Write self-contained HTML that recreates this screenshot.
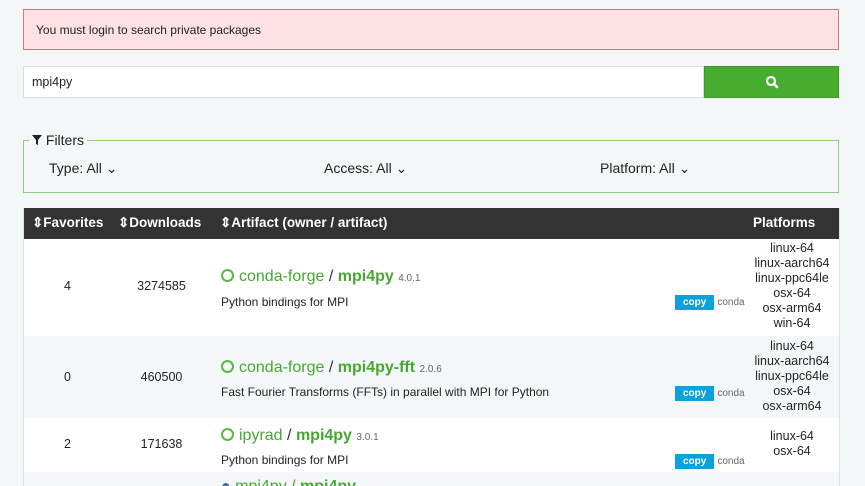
<!DOCTYPE html>
<html><head><style>
*{box-sizing:border-box;margin:0;padding:0}
body{width:865px;height:486px;overflow:hidden;background:#f4f7f8;font-family:"Liberation Sans",sans-serif;color:#222;position:relative}
.abs{position:absolute}
.alert{left:23px;top:9px;width:816px;height:41px;background:#fde1e5;border:1px solid #c97a86;font-size:12px;padding:13px 12px}
.inp{left:23px;top:66px;width:681px;height:32px;background:#fff;border:1px solid #ddd;font-size:12.5px;padding:8px 8px}
.btn{left:704px;top:66px;width:135px;height:32px;background:#46ad2e;border:1px solid #3d9a28}
.fs{left:23px;top:140px;width:816px;height:53px;border:1px solid #8bcf7d}
.lg{left:29px;top:132px;font-size:14px;padding:0 3px;background:#f4f7f8}
.f{position:absolute;top:160px;font-size:14px}
.hdr{left:23px;top:208px;width:816px;height:31px;background:#333;color:#fff;font-weight:bold;font-size:13.5px}
.hdr span{position:absolute;top:7px}
.row{left:23px;width:816px;font-size:12.5px}
.c1{position:absolute;width:89px;text-align:center}
.c2{position:absolute;left:89px;width:99px;text-align:center}
.name{position:absolute;left:198px;font-size:16px;color:#46a832;white-space:nowrap}
.name b{font-weight:bold}
.name small{font-size:10px;color:#666}
.name .sl{color:#333}
.ring{display:inline-block;width:13px;height:13px;border:2.5px solid #5cb844;border-radius:50%;margin-right:5px;vertical-align:-1px}
.desc{position:absolute;left:198px;font-size:12px}
.copy{position:absolute;left:652px;font-size:10px;color:#666}
.copy span{display:inline-block;background:#0aa2dc;color:#fff;font-weight:bold;padding:2px 8px;margin-right:3px}
.plat{position:absolute;left:722px;width:94px;text-align:center;font-size:12.5px;line-height:15px}
</style></head><body>
<div class="abs alert">You must login to search private packages</div>
<div class="abs inp">mpi4py</div>
<div class="abs btn"><svg width="135" height="30"><circle cx="66" cy="14" r="4" fill="none" stroke="#fff" stroke-width="2.2"/><line x1="69" y1="17" x2="72" y2="20" stroke="#fff" stroke-width="2.5" stroke-linecap="round"/></svg></div>
<div class="abs fs"></div>
<div class="abs lg"><svg width="10" height="10" viewBox="0 0 10 10"><path d="M0 0H10L6 5V10L4 9V5Z" fill="#222"/></svg> Filters</div>
<div class="f" style="left:49px">Type: All &#x2304;</div>
<div class="f" style="left:324px">Access: All &#x2304;</div>
<div class="f" style="left:600px">Platform: All &#x2304;</div>
<div class="abs hdr"><span style="left:9px">&#x21D5;Favorites</span><span style="left:95px">&#x21D5;Downloads</span><span style="left:197px">&#x21D5;Artifact (owner / artifact)</span><span style="left:730px">Platforms</span></div>

<div class="abs row" style="top:239px;height:97px;background:#fff">
<div class="c1" style="top:40px">4</div><div class="c2" style="top:40px">3274585</div>
<div class="name" style="top:29px"><i class="ring"></i>conda-forge <span class="sl">/</span> <b>mpi4py</b> <small>4.0.1</small></div>
<div class="desc" style="top:56px">Python bindings for MPI</div>
<div class="copy" style="top:56px"><span>copy</span>conda</div>
<div class="plat" style="top:2px">linux-64<br>linux-aarch64<br>linux-ppc64le<br>osx-64<br>osx-arm64<br>win-64</div>
</div>
<div class="abs row" style="top:336px;height:82px;background:#f4f7f8">
<div class="c1" style="top:34px">0</div><div class="c2" style="top:34px">460500</div>
<div class="name" style="top:23px"><i class="ring"></i>conda-forge <span class="sl">/</span> <b>mpi4py-fft</b> <small>2.0.6</small></div>
<div class="desc" style="top:49px">Fast Fourier Transforms (FFTs) in parallel with MPI for Python</div>
<div class="copy" style="top:50px"><span>copy</span>conda</div>
<div class="plat" style="top:3px">linux-64<br>linux-aarch64<br>linux-ppc64le<br>osx-64<br>osx-arm64</div>
</div>
<div class="abs row" style="top:418px;height:54px;background:#fff">
<div class="c1" style="top:19px">2</div><div class="c2" style="top:19px">171638</div>
<div class="name" style="top:9px"><i class="ring"></i>ipyrad <span class="sl">/</span> <b>mpi4py</b> <small>3.0.1</small></div>
<div class="desc" style="top:35px">Python bindings for MPI</div>
<div class="copy" style="top:36px"><span>copy</span>conda</div>
<div class="plat" style="top:11px">linux-64<br>osx-64</div>
</div>
<div class="abs row" style="top:472px;height:14px;background:#f4f7f8;overflow:hidden">
<div class="name" style="top:6px"><span style="color:#3a6ea5">&#9679;</span> mpi4py / <b>mpi4py</b></div>
</div>
<div class="abs" style="left:839px;top:208px;width:1px;height:278px;background:#dde2e4"></div>
<div class="abs" style="left:23px;top:208px;width:1px;height:278px;background:#dde2e4"></div>
</body></html>
